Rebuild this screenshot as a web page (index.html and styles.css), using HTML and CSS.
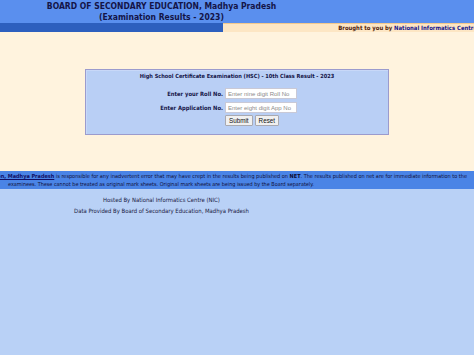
FILE: index.html
```html
<!DOCTYPE html>
<html>
<head>
<meta charset="utf-8">
<link rel="stylesheet" href="styles.css">
</head>
<body>
<div class="page">
  <header class="top">
    <div class="title">
      <div>BOARD OF SECONDARY EDUCATION, Madhya Pradesh</div>
      <div>(Examination Results - 2023)</div>
    </div>
  </header>
  <div class="strip">
    <div class="strip-left"></div>
    <div class="strip-right">Brought to you by <span class="nic">National Informatics Centre</span></div>
  </div>
  <main class="main">
    <form class="box">
      <div class="box-title">High School Certificate Examination (HSC) - 10th Class Result - 2023</div>
      <div class="fields">
        <label class="lbl">Enter your Roll No.</label>
        <input class="inp" type="text" placeholder="Enter nine digit Roll No">
        <label class="lbl">Enter Application No.</label>
        <input class="inp" type="text" placeholder="Enter eight digit App No">
        <span></span>
        <div class="btns">
          <button type="button" class="btn">Submit</button>
          <button type="button" class="btn">Reset</button>
        </div>
      </div>
    </form>
  </main>
  <div class="notice">
    <div class="line-wrap">
      <div class="line line1">The <b class="brd">Board of Secondary Education, Madhya Pradesh</b> is responsible for any inadvertent error that may have crept in the results being published on <b class="net">NET</b>. The results published on net are for immediate information to the</div>
    </div>
    <div class="line line2">examinees. These cannot be treated as original mark sheets. Original mark sheets are being issued by the Board separately.</div>
  </div>
  <footer class="foot">
    <div>Hosted By National Informatics Centre (NIC)</div>
    <div>Data Provided By Board of Secondary Education, Madhya Pradesh</div>
  </footer>
</div>
</body>
</html>
```

FILE: styles.css
```css
* { box-sizing: border-box; }
html, body { margin: 0; padding: 0; }
body {
  width: 474px;
  height: 355px;
  overflow: hidden;
  background: #b9d1f6;
  font-family: "DejaVu Sans Condensed", "DejaVu Sans", sans-serif;
  font-stretch: condensed;
  color: #1a1a4a;
}
.page { display: flex; flex-direction: column; height: 355px; }
.top {
  background: #5a8fee;
  height: 23px;
  display: flex;
}
.title {
  width: 323px;
  text-align: center;
  font-weight: bold;
  font-size: 8.5px;
  line-height: 11px;
  color: #141447;
  padding-top: 1px;
  white-space: nowrap;
}
.strip { display: flex; height: 9px; }
.strip-left { width: 223px; background: #2d5fbe; }
.strip-right {
  flex: 1;
  background: #fde6c4;
  border-top: 1px solid #f3c98e;
  font-size: 5.9px;
  font-weight: bold;
  color: #4e220c;
  white-space: nowrap;
  text-align: right;
  line-height: 8px;
  margin-right: -3px;
}
.nic { color: #14148a; }
.main {
  background: #fff3de;
  height: 139px;
  display: flex;
  justify-content: center;
  padding-top: 37px;
}
.box {
  width: 304px;
  height: 66px;
  margin: 0;
  background: #b9cff5;
  border: 1px solid #9b9bcd;
  box-shadow: inset 1px 1px 0 #c8d8f8;
  display: flex;
  flex-direction: column;
}
.box-title {
  font-size: 5.6px;
  font-weight: bold;
  color: #141447;
  margin-top: 2px;
  line-height: 8px;
  text-align: center;
  white-space: nowrap;
}
.fields {
  display: grid;
  grid-template-columns: 137px 72px;
  column-gap: 2px;
  row-gap: 3px;
  align-items: center;
  margin-top: 8px;
}
.lbl {
  text-align: right;
  font-size: 5.8px;
  font-weight: bold;
  color: #141447;
  white-space: nowrap;
}
.inp {
  width: 72px;
  height: 11px;
  padding: 0 2px;
  border: 1px solid #c9c9d6;
  background: #fff;
  font-family: "Liberation Sans", Arial, sans-serif;
  font-size: 6px;
  margin: 0;
}
.inp::placeholder { color: #8a8a8a; }
.btns { display: flex; gap: 2px; margin-top: -1px; }
.btn {
  height: 11px;
  padding: 0 3px;
  margin: 0;
  font-family: "Liberation Sans", Arial, sans-serif;
  font-size: 6.3px;
  color: #111;
  background: #f0f0f0;
  border: 1px solid #a9a9b0;
  border-radius: 1px;
  line-height: 9px;
}
.notice {
  background: #4a84e6;
  height: 18px;
  padding-top: 1px;
}
.line-wrap {
  width: 467px;
  display: flex;
  justify-content: flex-end;
}
.line {
  white-space: nowrap;
  font-size: 5.45px;
  line-height: 8px;
  color: #121240;
  flex-shrink: 0;
}
.line1 { font-size: 5.53px; }
.line2 { padding-left: 8px; }
.brd { color: #101066; text-decoration: underline; }
.net { color: #0a0a30; }
.foot {
  flex: 1;
  background: #b9d1f6;
  padding-top: 6px;
  width: 323px;
  text-align: center;
  font-size: 5.9px;
  line-height: 11px;
  color: #1a1a44;
  white-space: nowrap;
}
```
